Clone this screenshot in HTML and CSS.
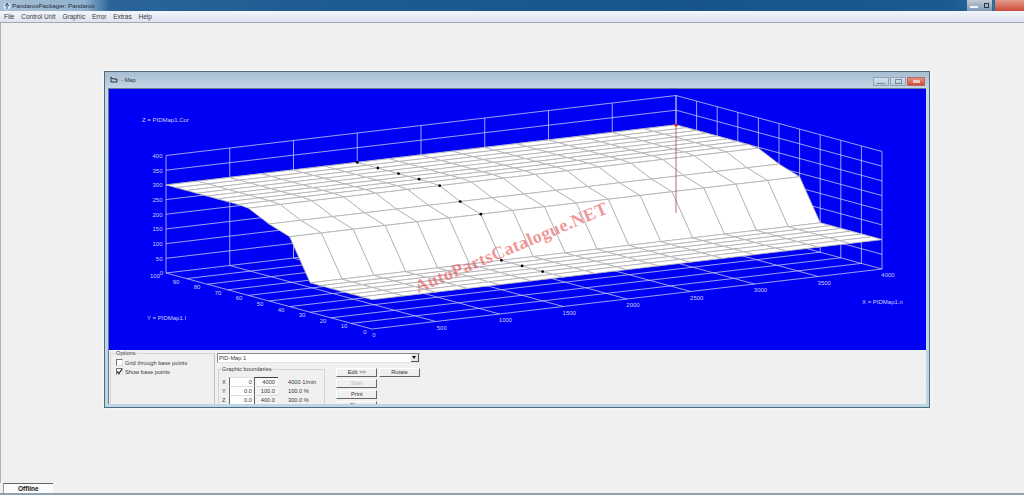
FILE: index.html
```html
<!DOCTYPE html>
<html lang="en">
<head>
<meta charset="UTF-8" />
<title>PandarosPackager: Pandaros</title>
<link rel="stylesheet" href="styles.css">
</head>
<body>

<header class="app-title">
  <svg class="app-icon" width="8" height="8" viewBox="0 0 8 8"><circle cx="4" cy="4" r="3.5" fill="#d8e4f2"/><path d="M4 1v6M2 4l2-3 2 3" stroke="#2a4f8a" fill="none"/></svg>
  <span>PandarosPackager: Pandaros</span>
  <div class="app-buttons">
    <span class="app-min"><i></i></span>
    <span class="app-max"><i></i></span>
    <span class="app-close"></span>
  </div>
</header>

<nav class="menu">
  <span>File</span>
  <span>Control Unit</span>
  <span>Graphic</span>
  <span>Error</span>
  <span>Extras</span>
  <span>Help</span>
</nav>

<main class="desk">
  <section class="window">
    <div class="win-title">
      <svg class="win-icon" width="8" height="8" viewBox="0 0 8 8"><path d="M1 1v5h6V3H3" stroke="#333" fill="none"/><path d="M1 1l2 2" stroke="#333"/></svg>
      <span>- Map</span>
      <div class="win-buttons">
        <span class="win-btn"><i class="glyph-min"></i></span>
        <span class="win-btn"><i class="glyph-max"></i></span>
        <span class="win-btn win-close"><i class="glyph-close"></i></span>
      </div>
    </div>

    <div class="client">
      <svg id="plot" class="plot" width="817" height="261" viewBox="109 88 817 261"></svg>

      <div class="panel">
        <!-- Options -->
        <fieldset class="options">
          <legend>Options</legend>
          <label class="check"><span class="box"></span>Grid through base points</label>
          <label class="check"><span class="box"><svg width="7" height="7" viewBox="0 0 7 7"><path d="M1 3.5l2 2 3-4.5" stroke="#222" stroke-width="1.2" fill="none"/></svg></span>Show base points</label>
        </fieldset>

        <div class="map-side">
          <div class="combo">
            <span>PID-Map 1</span>
            <span class="combo-arrow"></span>
          </div>
          <div class="map-lower">
            <fieldset class="bounds">
              <legend>Graphic boundaries</legend>
              <div class="bound-row"><span class="axis">X</span><span class="field">0</span><span class="field field-max">4000</span><span class="bound-val">4000 1/min</span></div>
              <div class="bound-row"><span class="axis">Y</span><span class="field">0.0</span><span class="field field-flat">100.0</span><span class="bound-val">100.0 %</span></div>
              <div class="bound-row"><span class="axis">Z</span><span class="field">0.0</span><span class="field field-flat">400.0</span><span class="bound-val">300.0 %</span></div>
            </fieldset>
            <div class="actions">
              <button>Edit &gt;&gt;</button>
              <button disabled>Start</button>
              <button>Print</button>
              <button class="btn-close">Close</button>
            </div>
            <div class="actions-right">
              <button>Rotate</button>
            </div>
          </div>
        </div>
      </div>
    </div>
  </section>
</main>

<footer class="status">
  <div class="status-cell">Offline</div>
</footer>

<script src="plot.js"></script>
</body>
</html>
```

FILE: styles.css
```css
* {
  box-sizing: border-box;
}

body {
  margin: 0;
  width: 1024px;
  height: 495px;
  overflow: hidden;
  display: flex;
  flex-direction: column;
  background-color: #f0f0f0;
  font-family: "Liberation Sans", Arial, sans-serif;
  font-size: 6.5px;
  color: #3a3a3a;
}

/* Application title bar */
.app-title {
  height: 11px;
  display: flex;
  align-items: center;
  gap: 1px;
  padding-left: 3px;
  font-size: 6.2px;
  color: #1c2c40;
  background: linear-gradient(to right, #a9c0d4 0, #8fb0cc 85px, #2c6498 110px, #1c5a92 350px, #17548c 700px, #1a5a90 950px, #3a7aa4 1024px);
}

.app-icon {
  flex: none;
}

.app-buttons {
  margin-left: auto;
  height: 11px;
  display: flex;
}

.app-min,
.app-max {
  width: 12px;
  display: flex;
  align-items: center;
  justify-content: center;
  background: linear-gradient(#c2ccd6, #7b98b2);
}

.app-min {
  width: 13px;
}

.app-min i {
  width: 8px;
  height: 2px;
  margin-top: 3px;
  background-color: #f2f5f8;
}

.app-max i {
  width: 5px;
  height: 5px;
  border: 1px solid #26384c;
}

.app-close {
  width: 29px;
  margin-left: 3px;
  background: linear-gradient(#e59a88, #cc4a3a);
}

/* Menu bar */
.menu {
  height: 12px;
  display: flex;
  align-items: center;
  gap: 6.8px;
  padding-left: 4px;
  background: linear-gradient(#f2f5fb, #dde3f0);
  border-bottom: 1px solid #a4a8ae;
}

/* MDI area */
.desk {
  flex: 1;
  padding: 48px 94px 0 104px;
  border-left: 1px solid #b4b4b4;
}

.window {
  width: 826px;
  height: 337px;
  margin-left: -1px;
  border: 1px solid #4f6b80;
  padding: 0 3px 3px;
  background: linear-gradient(#a7bdd2, #c8d9e8 18px, #bcd6e6);
  box-shadow: 0 0 4px rgba(255, 255, 255, 0.8);
}

.win-title {
  height: 16px;
  display: flex;
  align-items: center;
  gap: 3px;
  padding-left: 2px;
  font-size: 5.8px;
  color: #2b3440;
}

.win-buttons {
  margin-left: auto;
  margin-right: 1px;
  display: flex;
  gap: 1px;
  align-self: flex-start;
  padding-top: 5px;
}

.win-btn {
  width: 16px;
  height: 9px;
  display: flex;
  align-items: center;
  justify-content: center;
  border: 1px solid #8fa4b8;
  background: linear-gradient(#d4e0ec, #b4c8da);
}

.win-close {
  width: 18px;
  background: linear-gradient(#e59484, #cc4a3a);
  border-color: #b4685e;
}

.glyph-min {
  width: 8px;
  height: 1px;
  margin-top: 3px;
  background-color: #7a8a9a;
}

.glyph-max {
  width: 7px;
  height: 5px;
  border: 1px solid #7a8a9a;
}

.glyph-close {
  width: 7px;
  height: 3px;
  background-color: #f0c8c0;
}

.client {
  width: 818px;
  height: 316px;
  border: 1px solid #6a7c8c;
  border-width: 1px 0 0 1px;
  overflow: hidden;
  background-color: #f0f0f0;
}

.plot {
  display: block;
  background-color: #0000f4;
}

.wall {
  stroke: #c2caf6;
  stroke-width: 0.8;
  fill: none;
}

.mesh {
  fill: #fff;
  stroke: #b4b4b4;
  stroke-width: 0.8;
}

.marker {
  stroke: #b84040;
  stroke-width: 0.8;
}

.marker-top {
  fill: #d02020;
}

.dot {
  fill: #000;
}

.plot-label {
  fill: #c8cff8;
  font-family: "Liberation Sans", Arial, sans-serif;
  font-size: 6px;
}

.watermark {
  fill: #e23c3c;
  fill-opacity: 0.55;
  font-family: "Liberation Serif", "Times New Roman", serif;
  font-weight: bold;
  font-size: 18px;
}

/* Panel under the plot */
.panel {
  height: 55px;
  display: flex;
  align-items: flex-start;
  overflow: hidden;
  font-size: 5.7px;
}

fieldset {
  margin: 0;
  padding: 0;
  border: 1px solid #d4d4d4;
  min-width: 0;
}

legend {
  padding: 0 1px;
  line-height: 7px;
}

.options {
  width: 105px;
  height: 70px;
  margin: 0 2px 0 1px;
  padding: 1px 0 0 5px;
  border-right: 1px solid #c4c4c4;
}

.options legend {
  margin-left: -1px;
}

.check {
  display: flex;
  align-items: center;
  gap: 2px;
  height: 9px;
}

.box {
  width: 7px;
  height: 7px;
  display: block;
  border: 1px solid #777;
  border-right-color: #ddd;
  border-bottom-color: #ddd;
  background-color: #fff;
  line-height: 0;
}

.box svg {
  margin: -1px;
  display: block;
}

.map-side {
  width: 203px;
  margin-top: 3px;
}

.combo {
  height: 10px;
  padding-left: 1px;
  display: flex;
  align-items: center;
  justify-content: space-between;
  background-color: #fff;
  border: 1px solid #888;
  border-right-color: #e4e4e4;
  border-bottom-color: #e4e4e4;
}

.combo-arrow {
  width: 8px;
  height: 8px;
  position: relative;
  background-color: #e6e6e6;
  border-right: 1px solid #555;
  border-bottom: 1px solid #555;
}

.combo-arrow::after {
  content: "";
  position: absolute;
  left: 1px;
  top: 2px;
  border-left: 2.5px solid transparent;
  border-right: 2.5px solid transparent;
  border-top: 3px solid #111;
}

.map-lower {
  display: flex;
  align-items: flex-start;
}

.bounds {
  width: 108px;
  height: 60px;
  margin: 3px 0 0 1px;
  padding: 4px 0 0 3px;
}

.bounds legend {
  margin-left: -1px;
}

.bound-row {
  display: flex;
  align-items: center;
  height: 9px;
}

.axis {
  width: 7px;
}

.field {
  width: 24px;
  height: 9px;
  margin-right: 1px;
  padding-right: 1px;
  line-height: 8px;
  text-align: right;
  background-color: #fff;
  border-left: 1px solid #666;
  border-top: 1px solid #ddd;
}

.field-max {
  border-top: 1px solid #444;
  background-color: #fafafa;
  padding-right: 3px;
}

.field-flat {
  background-color: #f4f4f4;
  padding-right: 3px;
}

.bound-val {
  margin-left: 9px;
}

.actions {
  width: 41px;
  margin: 5px 0 0 11px;
  display: flex;
  flex-direction: column;
  gap: 2px;
}

.actions-right {
  width: 41px;
  margin: 5px 0 0 2px;
}

button {
  display: block;
  width: 100%;
  height: 9px;
  padding: 0;
  font: inherit;
  line-height: 7px;
  color: #333;
  background-color: #f0f0f0;
  border: 1px solid #fff;
  border-right-color: #666;
  border-bottom-color: #666;
}

button:disabled {
  color: #b8b8b8;
}

/* Status bar */
.status {
  height: 12px;
  padding-left: 3px;
  background: linear-gradient(#f0f0f0 10px, #8ea2b4 10px);
}

.status-cell {
  width: 50px;
  height: 10px;
  padding-left: 14px;
  font-weight: bold;
  line-height: 9px;
  color: #111;
  background-color: #fbfbfb;
  border-top: 1px solid #666;
  border-left: 1px solid #999;
}
```

FILE: plot.js
```js
// Draws the PID map as a fixed projection: page pixels = origin + x, y and z vectors
const SVG_NS = "http://www.w3.org/2000/svg";
const plot = document.getElementById("plot");

function project(x, y, z) {
  return [
    372 + (x / 4000) * 510 - (y / 100) * 206,
    328 - (x / 4000) * 60 - (y / 100) * 56 - (z / 400) * 117.5,
  ];
}

function add(tag, attrs, text) {
  const el = document.createElementNS(SVG_NS, tag);
  for (const key in attrs) el.setAttribute(key, attrs[key]);
  if (text) el.textContent = text;
  plot.appendChild(el);
  return el;
}

function line(a, b, cls) {
  add("line", { x1: a[0], y1: a[1], x2: b[0], y2: b[1], class: cls });
}

// Floor and the two back walls
for (let x = 0; x <= 4000; x += 500) {
  line(project(x, 0, 0), project(x, 100, 0), "wall");
  line(project(x, 100, 0), project(x, 100, 400), "wall");
}
for (let y = 0; y <= 100; y += 10) {
  line(project(0, y, 0), project(4000, y, 0), "wall");
  line(project(4000, y, 0), project(4000, y, 400), "wall");
}
for (let z = 50; z <= 400; z += 50) {
  line(project(0, 100, z), project(4000, 100, z), "wall");
  line(project(4000, 100, z), project(4000, 0, z), "wall");
}

// Map values along y, the same for every x
const heights = { 0: 100, 5: 100, 10: 100, 15: 100, 20: 100, 25: 100, 30: 100, 40: 238, 50: 262, 60: 297 };
const yBreaks = [100, 95, 90, 85, 80, 75, 70, 65, 60, 50, 40, 30, 25, 20, 15, 10, 5, 0];

function mapZ(y) {
  return y in heights ? heights[y] : 300;
}

for (let i = 0; i < yBreaks.length - 1; i++) {
  const y1 = yBreaks[i];
  const y2 = yBreaks[i + 1];
  for (let x = 0; x < 4000; x += 250) {
    const pts = [
      project(x, y1, mapZ(y1)),
      project(x + 250, y1, mapZ(y1)),
      project(x + 250, y2, mapZ(y2)),
      project(x, y2, mapZ(y2)),
    ];
    add("polygon", { points: pts.join(" "), class: "mesh" });
  }
}

// Cursor line and base points
const cursorTop = project(4000, 100, 300);
line(project(4000, 100, 0), cursorTop, "marker");
add("circle", { cx: cursorTop[0], cy: cursorTop[1], r: 1.5, class: "marker-top" });

for (let y = 10; y <= 100; y += 10) {
  const p = project(1500, y, mapZ(y));
  add("circle", { cx: p[0], cy: p[1], r: 1.4, class: "dot" });
}

// Axis numbers
function label(px, py, text, anchor) {
  add("text", { x: px, y: py, class: "plot-label", "text-anchor": anchor || "middle" }, text);
}

for (let z = 50; z <= 400; z += 50) {
  const p = project(0, 100, z);
  label(p[0] - 3.5, p[1] + 2.5, String(z), "end");
}
label(163, 274, "0", "end");
for (let y = 0; y <= 100; y += 10) {
  const p = project(0, y, 0);
  label(p[0] - 7 - y * 0.04, p[1] + 5, String(y));
}
for (let x = 0; x <= 4000; x += 500) {
  const p = project(x, 0, 0);
  label(p[0] + (x === 0 ? 2 : 6), p[1] + 8, String(x));
}

label(142, 121, "Z = PIDMap1.Cor", "start");
label(147, 319, "Y = PIDMap1.I", "start");
label(862, 303, "X = PIDMap1.n", "start");

add("text", {
  x: 418,
  y: 292,
  class: "watermark",
  textLength: 207,
  lengthAdjust: "spacing",
  transform: "rotate(-22.8 418 292)",
}, "AutoPartsCatalogue.NET");
```
